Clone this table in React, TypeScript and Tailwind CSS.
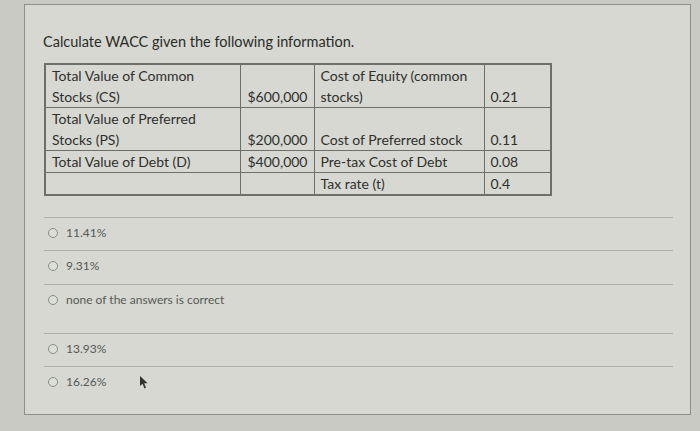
const font = { fontFamily: 'Lato, "Open Sans", sans-serif' };

const options = [
  { label: '11.41%', h: 'h-[33px]' },
  { label: '9.31%', h: 'h-[34px]' },
  { label: 'none of the answers is correct', h: 'h-[49px]' },
  { label: '13.93%', h: 'h-[33px]' },
  { label: '16.26%', h: 'h-[48px]' },
];

function Cell({ children, className = '' }: { children?: React.ReactNode; className?: string }) {
  return (
    <td className={`border border-[#6d6f6a] px-[6px] align-bottom leading-[21px] ${className}`}>
      {children}
    </td>
  );
}

function Cursor() {
  return (
    <svg
      className="absolute left-[139px] top-[375px] opacity-90"
      width="10"
      height="15"
      viewBox="0 0 10 15"
    >
      <path d="M1 1 L1 11 L3.5 8.8 L5.5 13.5 L7 12.8 L5.2 8.3 L8.6 8.2 Z" fill="#1f211f" />
    </svg>
  );
}

export default function App() {
  return (
    <div className="relative w-[700px] h-[431px] overflow-hidden bg-[#c8cac3] pt-[4px] pl-[24px]" style={font}>
      <div className="w-[667px] h-[411px] border border-[#8d8f89] bg-[#d6d8d1] pt-[27px] pl-[18px]">
        {/* Question */}
        <h1 className="text-[14.5px] leading-[20px] text-[#2b2c2a] mb-[11px]">
          Calculate WACC given the following information.
        </h1>

        {/* Data table */}
        <table className="border-collapse border-2 border-[#6d6f6a] text-[14px] text-[#2f302e] ml-[1px]">
          <tbody>
            <tr className="h-[43px]">
              <Cell className="w-[195px]">
                Total Value of Common
                <br />
                Stocks (CS)
              </Cell>
              <Cell className="w-[74px] text-right">$600,000</Cell>
              <Cell className="w-[170px]">
                Cost of Equity (common
                <br />
                stocks)
              </Cell>
              <Cell className="w-[67px]">0.21</Cell>
            </tr>
            <tr className="h-[43px]">
              <Cell>
                Total Value of Preferred
                <br />
                Stocks (PS)
              </Cell>
              <Cell className="text-right">$200,000</Cell>
              <Cell>Cost of Preferred stock</Cell>
              <Cell>0.11</Cell>
            </tr>
            <tr className="h-[22px]">
              <Cell>Total Value of Debt (D)</Cell>
              <Cell className="text-right">$400,000</Cell>
              <Cell>Pre-tax Cost of Debt</Cell>
              <Cell>0.08</Cell>
            </tr>
            <tr className="h-[22px]">
              <Cell />
              <Cell />
              <Cell>Tax rate (t)</Cell>
              <Cell>0.4</Cell>
            </tr>
          </tbody>
        </table>

        {/* Answers */}
        <div className="mt-[21px] w-[629px] ml-[1px]">
          {options.map((o) => (
            <div key={o.label} className={`${o.h} border-t border-[#aeb0aa] pt-[7px] pl-[4px]`}>
              <label className="flex items-center gap-[8px] text-[12px] leading-[16px] text-[#575955]">
                <span className="w-[10px] h-[10px] rounded-full border-[1.5px] border-[#8a8c87] bg-[#dcded8]" />
                {o.label}
              </label>
            </div>
          ))}
        </div>
      </div>
      <Cursor />
    </div>
  );
}
